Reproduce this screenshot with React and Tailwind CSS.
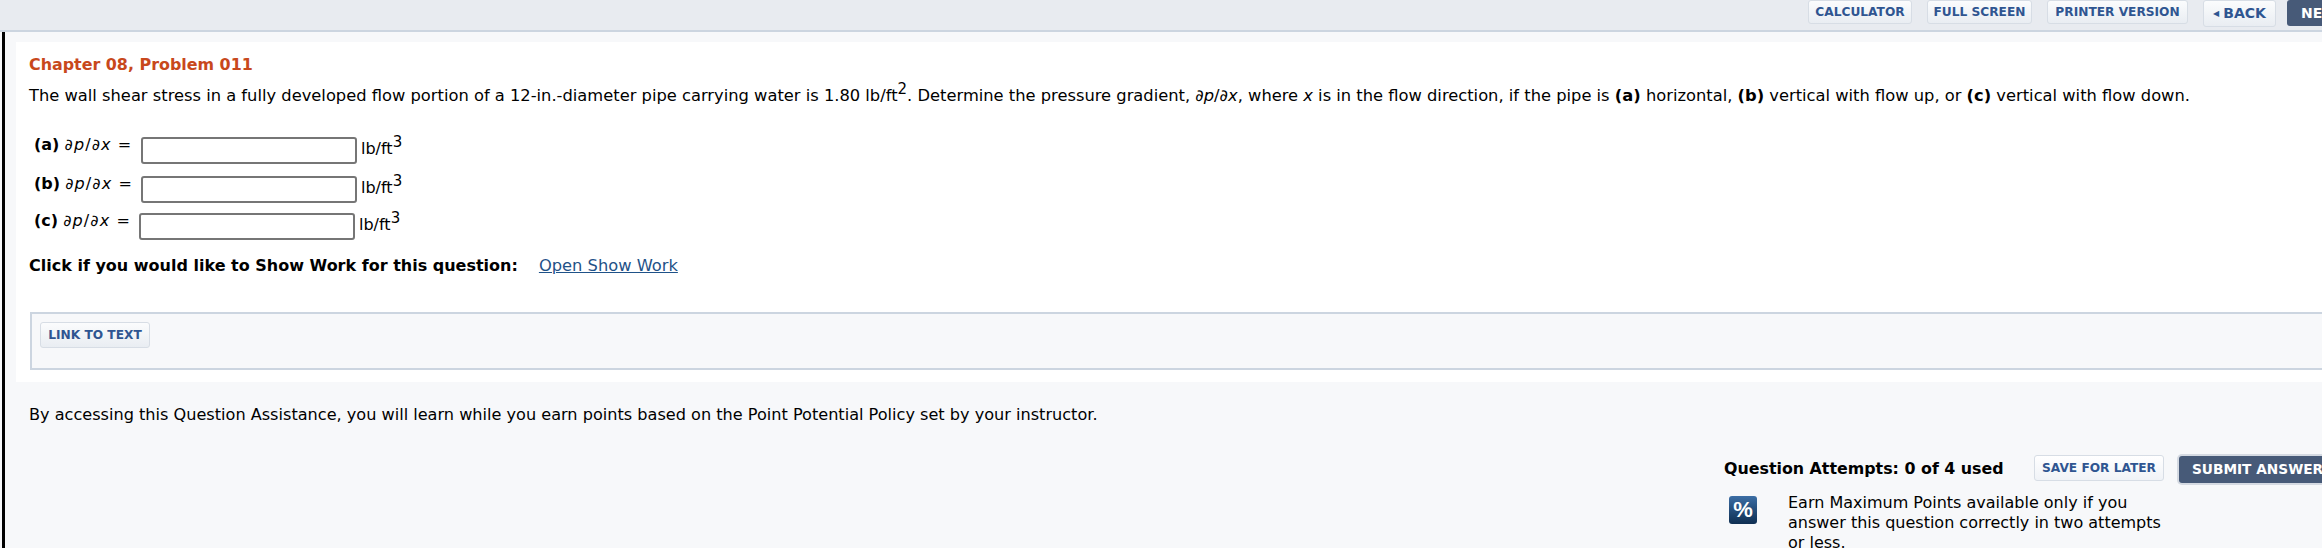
import React from 'react';

const font = "font-['DejaVu_Sans','Liberation_Sans',sans-serif]";
const toolButton = "flex items-center justify-center shrink-0 whitespace-nowrap bg-gradient-to-b from-[#fbfcfd] to-[#e9edf2] border border-[#d7dde5] rounded-[3px] text-[#2f5591] text-[12.2px] font-bold";

const answers = [
  { label: '(a)', top: 'mt-[30px]', indent: 'w-[107px]' },
  { label: '(b)', top: 'mt-[12px]', indent: 'w-[107px]' },
  { label: '(c)', top: 'mt-[10px]', indent: 'w-[105px]' },
];

function AnswerRow({ label, top, indent }) {
  return (
    <div className={`flex items-start h-[27px] ${top}`}>
      <div className={`${indent} shrink-0 leading-[20px] -mt-[2px] whitespace-nowrap`}>
        <b>{label}</b> <span className="tracking-[1.1px]">∂<i>p</i>/∂<i>x</i> =</span>
      </div>
      <div className="w-[216px] h-[27px] shrink-0 bg-white border-2 border-[#767676] rounded-[3px]" />
      <div className="ml-[4px] mt-[2px] leading-[20px] whitespace-nowrap">
        lb/ft<sup className="text-[15px] leading-none">3</sup>
      </div>
    </div>
  );
}

export default function App() {
  return (
    <div className={`${font} w-[2322px] h-[548px] overflow-hidden bg-[#f7f8fa] text-[16px] text-black`}>
      {/* Toolbar */}
      <div className="h-[32px] bg-[#e8ebf0] border-b-2 border-[#ccd5e0]">
        <div className="ml-auto w-[514px] flex items-start">
          <div className={`${toolButton} w-[104px] h-[24px]`}>CALCULATOR</div>
          <div className={`${toolButton} w-[105px] h-[24px] ml-[15px]`}>FULL SCREEN</div>
          <div className={`${toolButton} w-[141px] h-[24px] ml-[15px]`}>PRINTER VERSION</div>
          <div className={`${toolButton} w-[73px] h-[27px] ml-[15px] text-[14px]`}>
            <span className="text-[8px] mr-[4px]">◀</span>BACK
          </div>
          <div className="w-[70px] h-[26px] ml-[11px] shrink-0 pl-[14px] flex items-center bg-[#475a78] rounded-[3px] text-white text-[14px] font-bold">NEXT</div>
        </div>
      </div>

      <div className="ml-[2px] border-l-[3px] border-black h-[516px]">
        <div className="pt-[10px] pl-[11px]">
          {/* Question panel */}
          <div className="bg-white h-[340px] pl-[13px] pt-[11px]">
            <h1 className="text-[#c8481c] font-bold text-[15.9px] leading-[22px] mt-[1px]">Chapter 08, Problem 011</h1>
            <p className="mt-[9px] text-[16.31px] leading-[22px] whitespace-nowrap">
              The wall shear stress in a fully developed flow portion of a 12-in.-diameter pipe carrying water is 1.80 lb/ft<sup className="text-[15px] leading-none">2</sup>. Determine the pressure gradient, ∂<i>p</i>/∂<i>x</i>, where <i>x</i> is in the flow direction, if the pipe is <b>(a)</b> horizontal, <b>(b)</b> vertical with flow up, or <b>(c)</b> vertical with flow down.
            </p>
            <div className="pl-[5px]">
              {answers.map((a) => <AnswerRow key={a.label} {...a} />)}
            </div>
            <div className="mt-[15px] flex leading-[22px] whitespace-nowrap">
              <b>Click if you would like to Show Work for this question:</b>
              <a className="ml-[21px] text-[16.3px] text-[#1f5288] underline">Open Show Work</a>
            </div>
            <div className="mt-[35px] h-[58px] border-2 border-[#ccd5e0] bg-[#f7f8fa] pl-[8px] pt-[8px] ml-[1px] -mr-[4px]">
              <div className={`${toolButton} w-[110px] h-[26px]`}>LINK TO TEXT</div>
            </div>
          </div>
          {/* Assistance note */}
          <p className="mt-[22px] ml-[13px] text-[16.13px] leading-[22px]">
            By accessing this Question Assistance, you will learn while you earn points based on the Point Potential Policy set by your instructor.
          </p>
          <div className="ml-auto w-[598px] mt-[29px]">
            <div className="flex items-start">
              <div className="w-[310px] shrink-0 font-bold text-[15.85px] leading-[26px] whitespace-nowrap mt-[1px]">Question Attempts: 0 of 4 used</div>
              <div className={`${toolButton} w-[130px] h-[26px] from-white to-[#f0f3f7]`}>SAVE FOR LATER</div>
              <div className="w-[160px] h-[27px] ml-[15px] mt-[1px] shrink-0 pl-[13px] flex items-center bg-[#475a78] rounded-[3px] ring-2 ring-[#d5dae2] text-white text-[13.7px] font-bold whitespace-nowrap">SUBMIT ANSWER</div>
            </div>
            <div className="flex mt-[10px]">
              <div className="w-[28px] h-[28px] ml-[5px] mt-[3px] shrink-0 flex items-center justify-center rounded-[3px] bg-gradient-to-b from-[#3c6ea5] to-[#0f2f52] text-white font-['Liberation_Sans',sans-serif] text-[22px] font-bold leading-none">%</div>
              <p className="ml-[31px] w-[385px] leading-[20px]">
                Earn Maximum Points available only if you answer this question correctly in two attempts or less.
              </p>
            </div>
          </div>
        </div>
      </div>
    </div>
  );
}
